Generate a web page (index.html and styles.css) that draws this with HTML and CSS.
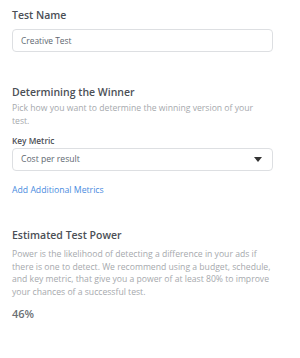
FILE: index.html
```html
<!DOCTYPE html>
<html lang="en">
<head>
    <meta charset="UTF-8">
    <meta name="viewport" content="width=device-width, initial-scale=1.0">
    <title>Split Test Settings</title>
    <link rel="stylesheet" href="styles.css">
</head>
<body>
    <div class="panel">
        <section class="section section-name">
            <h2 class="title">Test Name</h2>
            <div class="field">Creative Test</div>
        </section>

        <section class="section section-winner">
            <h2 class="title">Determining the Winner</h2>
            <p class="desc">Pick how you want to determine the winning version of your test.</p>
            <div class="label">Key Metric</div>
            <div class="field select">
                <span>Cost per result</span>
                <svg class="caret" width="8" height="5" viewBox="0 0 8 5"><path d="M0 0h8L4 5z" fill="#333"/></svg>
            </div>
            <a class="link" href="#">Add Additional Metrics</a>
        </section>

        <section class="section section-power">
            <h2 class="title">Estimated Test Power</h2>
            <p class="desc">Power is the likelihood of detecting a difference in your ads if there is one to detect. We recommend using a budget, schedule, and key metric, that give you a power of at least 80% to improve your chances of a successful test.</p>
            <div class="power">46%</div>
        </section>
    </div>
</body>
</html>
```

FILE: styles.css
```css
* { box-sizing: border-box; margin: 0; padding: 0; }
body { background: #fff; font-family: "Open Sans", "Liberation Sans", sans-serif; color: #4b4f56; }
.panel { width: 300px; padding: 8px 27px 0 12px; }
.title { font-size: 10.5px; line-height: 14px; font-weight: 600; color: #4b4f56; }
.field { margin-top: 7px; height: 23px; border: 1px solid #dddfe2; border-radius: 4px; padding: 0 8px; font-size: 8.4px; line-height: 21px; color: #606770; }
.section-winner { margin-top: 33px; }
.desc { margin-top: 3px; font-size: 8.65px; line-height: 12.5px; color: #a6a9ad; }
.section-winner .desc { max-width: 250px; }
.label { margin-top: 7px; font-size: 8.3px; line-height: 13px; font-weight: 600; color: #4b4f56; }
.select { margin-top: 1px; display: flex; justify-content: space-between; align-items: center; font-size: 8.6px; color: #606770; }
.caret { margin-right: 2px; }
.link { display: block; margin-top: 13px; font-size: 8.7px; line-height: 13px; color: #4a8ce0; text-decoration: none; }
.section-power { margin-top: 31px; }
.section-power .desc { margin-top: 6px; line-height: 12.6px; }
.power { margin-top: 9px; font-size: 11px; line-height: 14px; font-weight: 600; color: #6b6f75; }
```
